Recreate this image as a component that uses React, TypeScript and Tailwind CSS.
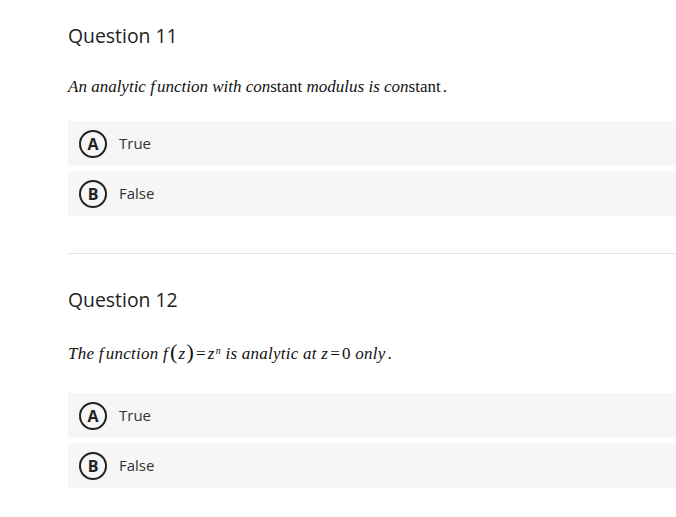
import React from "react";

interface Option {
  key: string;
  label: string;
}

const options: Option[] = [
  { key: "A", label: "True" },
  { key: "B", label: "False" },
];

function OptionRow({ opt }: { opt: Option }) {
  return (
    <div className="h-[45px] bg-[#f6f6f6] flex items-center pl-[11px]">
      <div className="shrink-0 w-[28px] h-[28px] rounded-full border-2 border-solid border-[#222] flex items-center justify-center text-[16px] font-bold text-[#222] leading-none">
        {opt.key}
      </div>
      <span className="ml-[12px] text-[15px] text-[#333]">{opt.label}</span>
    </div>
  );
}

function Options() {
  return (
    <div className="flex flex-col gap-[5px]">
      {options.map((o) => (
        <OptionRow key={o.key} opt={o} />
      ))}
    </div>
  );
}

const serif = { fontFamily: '"Liberation Serif", serif' };

export default function App() {
  return (
    <div
      className="w-[676px] h-[517px] bg-white overflow-hidden pl-[68px] pt-[22px]"
      style={{ fontFamily: '"Open Sans", sans-serif' }}
    >
      {/* Question 11 */}
      <h2 className="text-[19.4px] leading-[28px] text-[#222]">Question 11</h2>
      <p className="mt-[25px] h-[24px] text-[17px] leading-[24px] italic text-[#111]" style={serif}>
        An analytic <span className="mr-[2px]">f</span>unction with con<span className="not-italic">stant</span> modulus is con
        <span className="not-italic">stant</span>
        <span className="not-italic ml-[2px]">.</span>
      </p>
      <div className="mt-[22px]">
        <Options />
      </div>

      <div className="mt-[37px] h-px bg-[#e3e3e3]" />

      {/* Question 12 */}
      <h2 className="mt-[32px] text-[19.4px] leading-[28px] text-[#222]">Question 12</h2>
      <p className="mt-[27px] h-[24px] text-[17px] leading-[24px] italic text-[#111] tracking-[0.25px]" style={serif}>
        The <span className="mr-[2px]">f</span>unction <span className="mr-[2px]">f</span>
        <span className="not-italic text-[22px] leading-none font-light">(</span>
        <span className="mx-[1px]">z</span>
        <span className="not-italic text-[22px] leading-none font-light">)</span>
        <span className="not-italic mx-[2px]">=</span>z
        <sup className="text-[10px] ml-[1px]">n</sup> is analytic at z<span className="not-italic mx-[2px]">=</span>
        <span className="not-italic">0</span> only
        <span className="not-italic ml-[2px]">.</span>
      </p>
      <div className="mt-[28px]">
        <Options />
      </div>
    </div>
  );
}
